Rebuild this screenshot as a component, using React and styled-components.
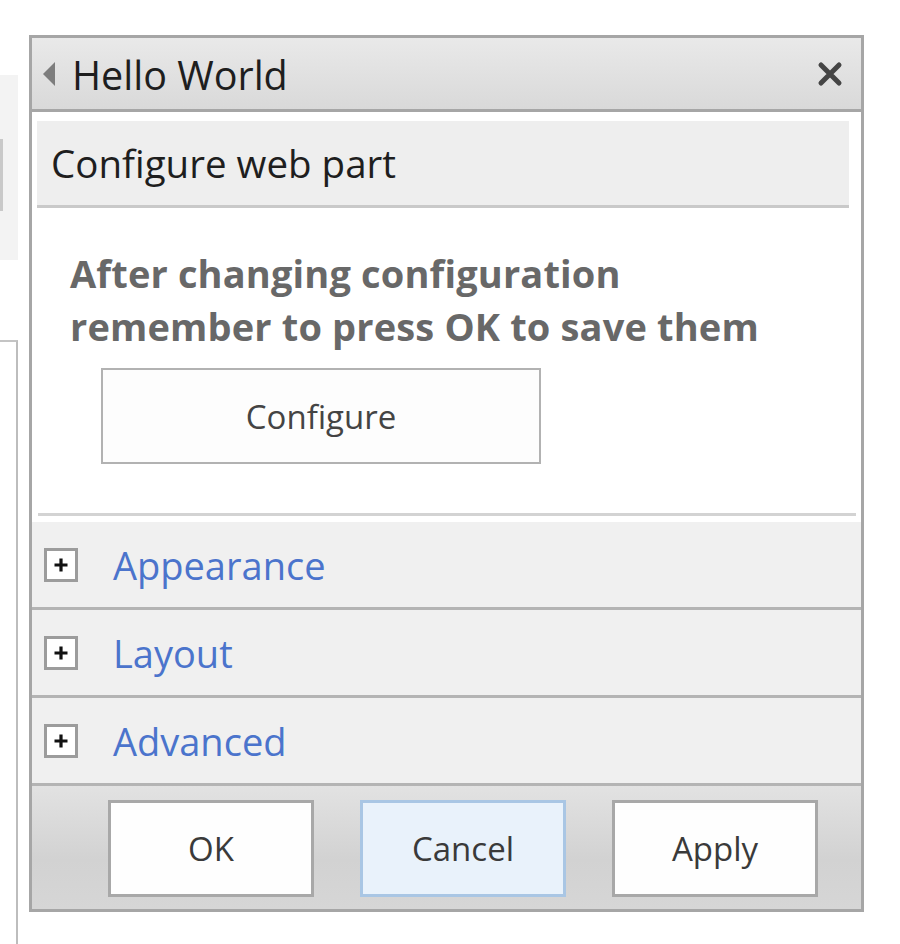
import styled, { createGlobalStyle } from "styled-components";

const GlobalStyle = createGlobalStyle`
  html, body {
    margin: 0;
    padding: 0;
    background: #ffffff;
  }
  body {
    font-family: "Open Sans", "Noto Sans", sans-serif;
    color: #222;
  }
`;

const Page = styled.div`
  display: flex;
  height: 944px;
  overflow: hidden;
`;

const LeftRail = styled.div`
  width: 18px;
  display: flex;
  flex-direction: column;
`;

const RailStrip = styled.div`
  margin-top: 75px;
  height: 185px;
  background: #f3f3f3;
  display: flex;
  align-items: center;
`;

const RailMark = styled.div`
  width: 3px;
  height: 72px;
  margin-top: 14px;
  background: #c9c9c9;
`;

const RailBox = styled.div`
  margin-top: 80px;
  flex: 1;
  border-top: 2px solid #c4c4c4;
  border-right: 2px solid #bdbdbd;
`;

const Panel = styled.div`
  margin: 35px 0 0 11px;
  width: 835px;
  height: 877px;
  box-sizing: border-box;
  border: 3px solid #a6a6a6;
  display: flex;
  flex-direction: column;
  background: #fff;
`;

const Header = styled.div`
  height: 71px;
  flex-shrink: 0;
  border-bottom: 3px solid #a6a6a6;
  background: linear-gradient(#e9e9e9, #d9d9d9);
  display: flex;
  align-items: center;
  padding: 0 18px 0 10px;
`;

const Title = styled.div`
  flex: 1;
  font-size: 39.5px;
  line-height: 1;
  margin: 4px 0 0 16px;
  color: #1e1e1e;
`;

const CloseButton = styled.button`
  background: none;
  border: none;
  padding: 0;
  display: flex;
  cursor: pointer;
`;

const Body = styled.div`
  flex: 1;
  display: flex;
  flex-direction: column;
`;

const Config = styled.div`
  box-sizing: border-box;
  padding: 9px 12px 0 5px;
  height: 401px;
  flex-shrink: 0;
`;

const ConfigHeader = styled.div`
  height: 84px;
  background: #eeeeee;
  border-bottom: 3px solid #c9c9c9;
  display: flex;
  align-items: center;
  padding-left: 14px;
  font-size: 38.5px;
  color: #1e1e1e;
`;

const Notice = styled.p`
  margin: 39px 0 0 33px;
  font-size: 38px;
  line-height: 53px;
  font-weight: 700;
  color: #686868;
  letter-spacing: 0.15px;
`;

const ConfigureButton = styled.button`
  margin: 15px 0 0 64px;
  width: 440px;
  height: 96px;
  border: 2px solid #b2b2b2;
  background: #fdfdfd;
  font-family: inherit;
  font-size: 33px;
  color: #444;
`;

const Separator = styled.div`
  height: 3px;
  margin: 0 5px 0 6px;
  background: #d3d3d3;
  flex-shrink: 0;
`;

const Sections = styled.div`
  margin-top: 6px;
  display: flex;
  flex-direction: column;
`;

const Section = styled.div`
  height: 85px;
  background: #f0f0f0;
  border-bottom: 3px solid #b4b4b4;
  display: flex;
  align-items: center;
  padding-left: 12px;
`;

const PlusBox = styled.span`
  width: 28px;
  height: 28px;
  border: 3px solid #9c9c9c;
  background: #fff;
  display: flex;
  align-items: center;
  justify-content: center;
`;

const SectionLabel = styled.span`
  margin-left: 35px;
  font-size: 38px;
  color: #4b74cc;
`;

const Footer = styled.div`
  flex: 1;
  background: linear-gradient(#e2e2e2, #d2d2d2 60%, #d6d6d6);
  display: flex;
  align-items: flex-start;
  padding: 14px 0 0 76px;
  gap: 46px;
`;

const FooterButton = styled.button`
  width: 206px;
  height: 97px;
  box-sizing: border-box;
  border: 3px solid ${(p) => (p.$active ? "#a9c6e4" : "#a8a8a8")};
  background: ${(p) => (p.$active ? "#e9f2fb" : "#fefefe")};
  font-family: inherit;
  font-size: 33px;
  color: #3a3a3a;
`;

function PlusIcon() {
  return (
    <svg width="16" height="16" viewBox="0 0 16 16">
      <path d="M8 1.5v13M1.5 8h13" stroke="#111" strokeWidth="3.2" />
    </svg>
  );
}

export default function App() {
  const sections = ["Appearance", "Layout", "Advanced"];
  return (
    <>
      <GlobalStyle />
      <Page>
        <LeftRail>
          <RailStrip>
            <RailMark />
          </RailStrip>
          <RailBox />
        </LeftRail>
        <Panel>
          <Header>
            <svg width="14" height="26" viewBox="0 0 14 26">
              <path d="M13 1 L1 13 L13 25 Z" fill="#7d7d7d" />
            </svg>
            <Title>Hello World</Title>
            <CloseButton>
              <svg width="26" height="26" viewBox="0 0 26 26">
                <path
                  d="M4 4 L22 22 M22 4 L4 22"
                  stroke="#444"
                  strokeWidth="5"
                  strokeLinecap="round"
                />
              </svg>
            </CloseButton>
          </Header>
          <Body>
            <Config>
              <ConfigHeader>Configure web part</ConfigHeader>
              <Notice>
                After changing configuration
                <br />
                remember to press OK to save them
              </Notice>
              <ConfigureButton>Configure</ConfigureButton>
            </Config>
            <Separator />
            <Sections>
              {sections.map((s) => (
                <Section key={s}>
                  <PlusBox>
                    <PlusIcon />
                  </PlusBox>
                  <SectionLabel>{s}</SectionLabel>
                </Section>
              ))}
            </Sections>
            <Footer>
              <FooterButton>OK</FooterButton>
              <FooterButton $active>Cancel</FooterButton>
              <FooterButton>Apply</FooterButton>
            </Footer>
          </Body>
        </Panel>
      </Page>
    </>
  );
}
